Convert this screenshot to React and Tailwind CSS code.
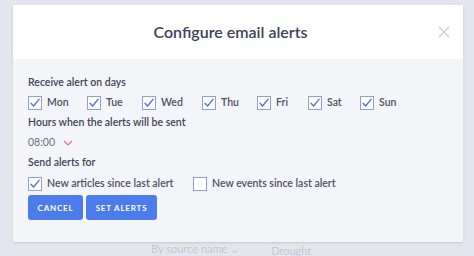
import React, { useState } from 'react';

const days = [
  { label: 'Mon', w: 'w-[59px]' },
  { label: 'Tue', w: 'w-[55px]' },
  { label: 'Wed', w: 'w-[60px]' },
  { label: 'Thu', w: 'w-[55px]' },
  { label: 'Fri', w: 'w-[51px]' },
  { label: 'Sat', w: 'w-[52px]' },
  { label: 'Sun', w: 'w-[50px]' },
];

const Check = ({ checked }) => (
  <span className="w-[14px] h-[14px] border border-[#8e9fde] bg-white flex items-center justify-center shrink-0">
    {checked && (
      <svg width="12" height="12" viewBox="0 0 12 12" fill="none">
        <path d="M2 6.2l2.6 2.8L10.2 2.2" stroke="#4d6fd9" strokeWidth="1.3" strokeLinecap="round" strokeLinejoin="round" />
      </svg>
    )}
  </span>
);

const App = () => {
  const [selected, setSelected] = useState(days.map(() => true));
  const [articles, setArticles] = useState(true);
  const [events, setEvents] = useState(false);

  return (
    <div className="h-[256px] w-[474px] bg-[#e3e6ee] pt-[5px] overflow-hidden" style={{ fontFamily: 'Lato, "Open Sans", sans-serif' }}>
      <div className="ml-[13px] w-[450px] shadow-sm">
        <div className="h-[54px] bg-white flex items-center justify-center relative pr-[15px]">
          <h1 className="text-[16px] font-semibold text-[#3b4356]">Configure email alerts</h1>
          <button className="absolute right-[13px] top-[21px] text-[#c9cdd5]">
            <svg width="12" height="12" viewBox="0 0 12 12">
              <path d="M1 1l10 10M11 1L1 11" stroke="currentColor" strokeWidth="1.2" />
            </svg>
          </button>
        </div>
        <div className="bg-[#f4f5f9] pl-[15px] pt-[14px] pb-[22px] text-[10.5px] text-[#3d4353]">
          <div className="h-[20px] flex items-center font-semibold">Receive alert on days</div>
          <div className="h-[20px] flex items-center">
            {days.map((d, i) => (
              <label
                key={d.label}
                className={`${d.w} flex items-center gap-[5px] cursor-pointer font-semibold text-[#4b5162]`}
                onClick={() => setSelected(selected.map((s, j) => (j === i ? !s : s)))}
              >
                <Check checked={selected[i]} />
                <span>{d.label}</span>
              </label>
            ))}
          </div>
          <div className="h-[20px] flex items-center font-semibold">Hours when the alerts will be sent</div>
          <div className="h-[20px] flex items-center text-[#6a7080]">
            <span>08:00</span>
            <svg className="ml-[8px]" width="10" height="6" viewBox="0 0 10 6" fill="none">
              <path d="M1 1l4 4 4-4" stroke="#e0718c" strokeWidth="1.2" />
            </svg>
          </div>
          <div className="h-[20px] flex items-center font-semibold">Send alerts for</div>
          <div className="h-[21px] flex items-center font-semibold text-[#4b5162]">
            <label className="w-[165px] flex items-center gap-[5px] cursor-pointer" onClick={() => setArticles(!articles)}>
              <Check checked={articles} />
              <span>New articles since last alert</span>
            </label>
            <label className="flex items-center gap-[5px] cursor-pointer" onClick={() => setEvents(!events)}>
              <Check checked={events} />
              <span>New events since last alert</span>
            </label>
          </div>
          <div className="flex gap-[3px] mt-[1px]">
            <button className="h-[25px] w-[55px] rounded-[3px] bg-[#4c7cec] text-white text-[8px] font-bold tracking-[0.1em]">CANCEL</button>
            <button className="h-[25px] w-[71px] rounded-[3px] bg-[#4c7cec] text-white text-[8px] font-bold tracking-[0.1em]">SET ALERTS</button>
          </div>
        </div>
      </div>
      <div className="flex text-[11px] text-[#c4c8d2] -mt-[1px]">
        <span className="ml-[151px]">By source name ⌄</span>
        <span className="ml-[32px] mt-[2px]">Drought</span>
      </div>
    </div>
  );
};

export default App;
